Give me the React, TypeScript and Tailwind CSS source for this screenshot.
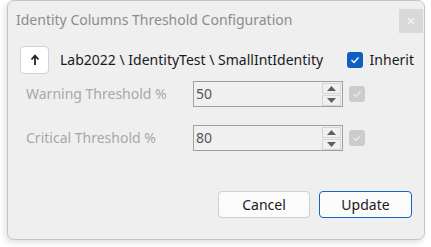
import React from "react";

const font = { fontFamily: '"Noto Sans", "Open Sans", sans-serif' };

function Spinner() {
  return (
    <div className="flex flex-col w-[19px] h-[25px] mr-[1px] justify-between py-[1px]">
      <div className="h-[11px] border border-[#d6d6d6] bg-[#f0f0f0] flex items-center justify-center">
        <svg width="9" height="5" viewBox="0 0 9 5"><path d="M0 5 L4.5 0 L9 5 Z" fill="#606060" /></svg>
      </div>
      <div className="h-[11px] border border-[#d6d6d6] bg-[#f0f0f0] flex items-center justify-center">
        <svg width="9" height="5" viewBox="0 0 9 5"><path d="M0 0 L4.5 5 L9 0 Z" fill="#606060" /></svg>
      </div>
    </div>
  );
}

function Row({ label, value }: { label: string; value: string }) {
  return (
    <div className="flex items-center h-[26px]">
      <div className="w-[185px] pl-[18px] text-[14px] text-[#a8a8a8] leading-none whitespace-nowrap">{label}</div>
      <div className="w-[150px] h-[26px] border border-[#a0a0a0] bg-[#f0f0f0] flex items-center">
        <span className="flex-1 pl-[2px] text-[14px] text-[#555] leading-none">{value}</span>
        <Spinner />
      </div>
      <div className="ml-[6px] w-[16px] h-[16px] rounded-[3px] bg-[#cccccc] flex items-center justify-center">
        <svg width="10" height="8" viewBox="0 0 10 8"><path d="M1.5 4 L4 6.5 L8.5 1.5" stroke="#ececec" strokeWidth="1.2" fill="none" /></svg>
      </div>
    </div>
  );
}

export default function App() {
  return (
    <div className="w-[431px] h-[247px] bg-white overflow-hidden" style={font}>
      <div className="ml-[7px] w-[418px] h-[240px] bg-[#efefef] border border-[#c4c4c4] rounded-[7px] shadow-[-2px_3px_6px_rgba(0,0,0,0.12)] flex flex-col">
        <div className="flex items-start h-[44px]">
          <div className="pl-[8px] pt-[7px] text-[14px] text-[#8c8c8c] leading-[24px] flex-1 whitespace-nowrap">Identity Columns Threshold Configuration</div>
          <div className="mt-[8px] mr-[1px] w-[24px] h-[24px] bg-[#d9d9d9] flex items-center justify-center">
            <svg width="8" height="8" viewBox="0 0 8 8"><path d="M1 1 L7 7 M7 1 L1 7" stroke="#f5f5f5" strokeWidth="1.4" /></svg>
          </div>
        </div>
        <div className="flex items-center h-[28px] mt-[1px]">
          <div className="ml-[12px] w-[29px] h-[28px] bg-white border border-[#d2d2d2] rounded-[4px] flex items-center justify-center">
            <svg width="10" height="12" viewBox="0 0 10 12"><path d="M5 11 V2 M1.5 5.5 L5 1.5 L8.5 5.5" stroke="#222" strokeWidth="1.8" fill="none" /></svg>
          </div>
          <div className="ml-[11px] text-[14px] text-[#1a1a1a] leading-none flex-1 whitespace-nowrap">Lab2022 \ IdentityTest \ SmallIntIdentity</div>
          <div className="w-[16px] h-[16px] rounded-[3px] bg-[#0f5fc2] flex items-center justify-center">
            <svg width="10" height="8" viewBox="0 0 10 8"><path d="M1.5 4 L4 6.5 L8.5 1.5" stroke="#fff" strokeWidth="1.3" fill="none" /></svg>
          </div>
          <div className="ml-[7px] mr-[10px] text-[14px] text-[#1a1a1a] leading-none">Inherit</div>
        </div>
        <div className="mt-[7px]">
          <Row label="Warning Threshold %" value="50" />
        </div>
        <div className="mt-[18px]">
          <Row label="Critical Threshold %" value="80" />
        </div>
        <div className="mt-[40px] flex justify-end gap-[9px] pr-[12px]">
          <button className="w-[92px] h-[27px] bg-[#fbfbfb] border border-[#d0d0d0] rounded-[4px] text-[14px] text-[#1a1a1a] leading-none">Cancel</button>
          <button className="w-[93px] h-[27px] bg-[#fbfbfb] border border-[#1466c4] rounded-[4px] text-[14px] text-[#1a1a1a] leading-none">Update</button>
        </div>
      </div>
    </div>
  );
}
